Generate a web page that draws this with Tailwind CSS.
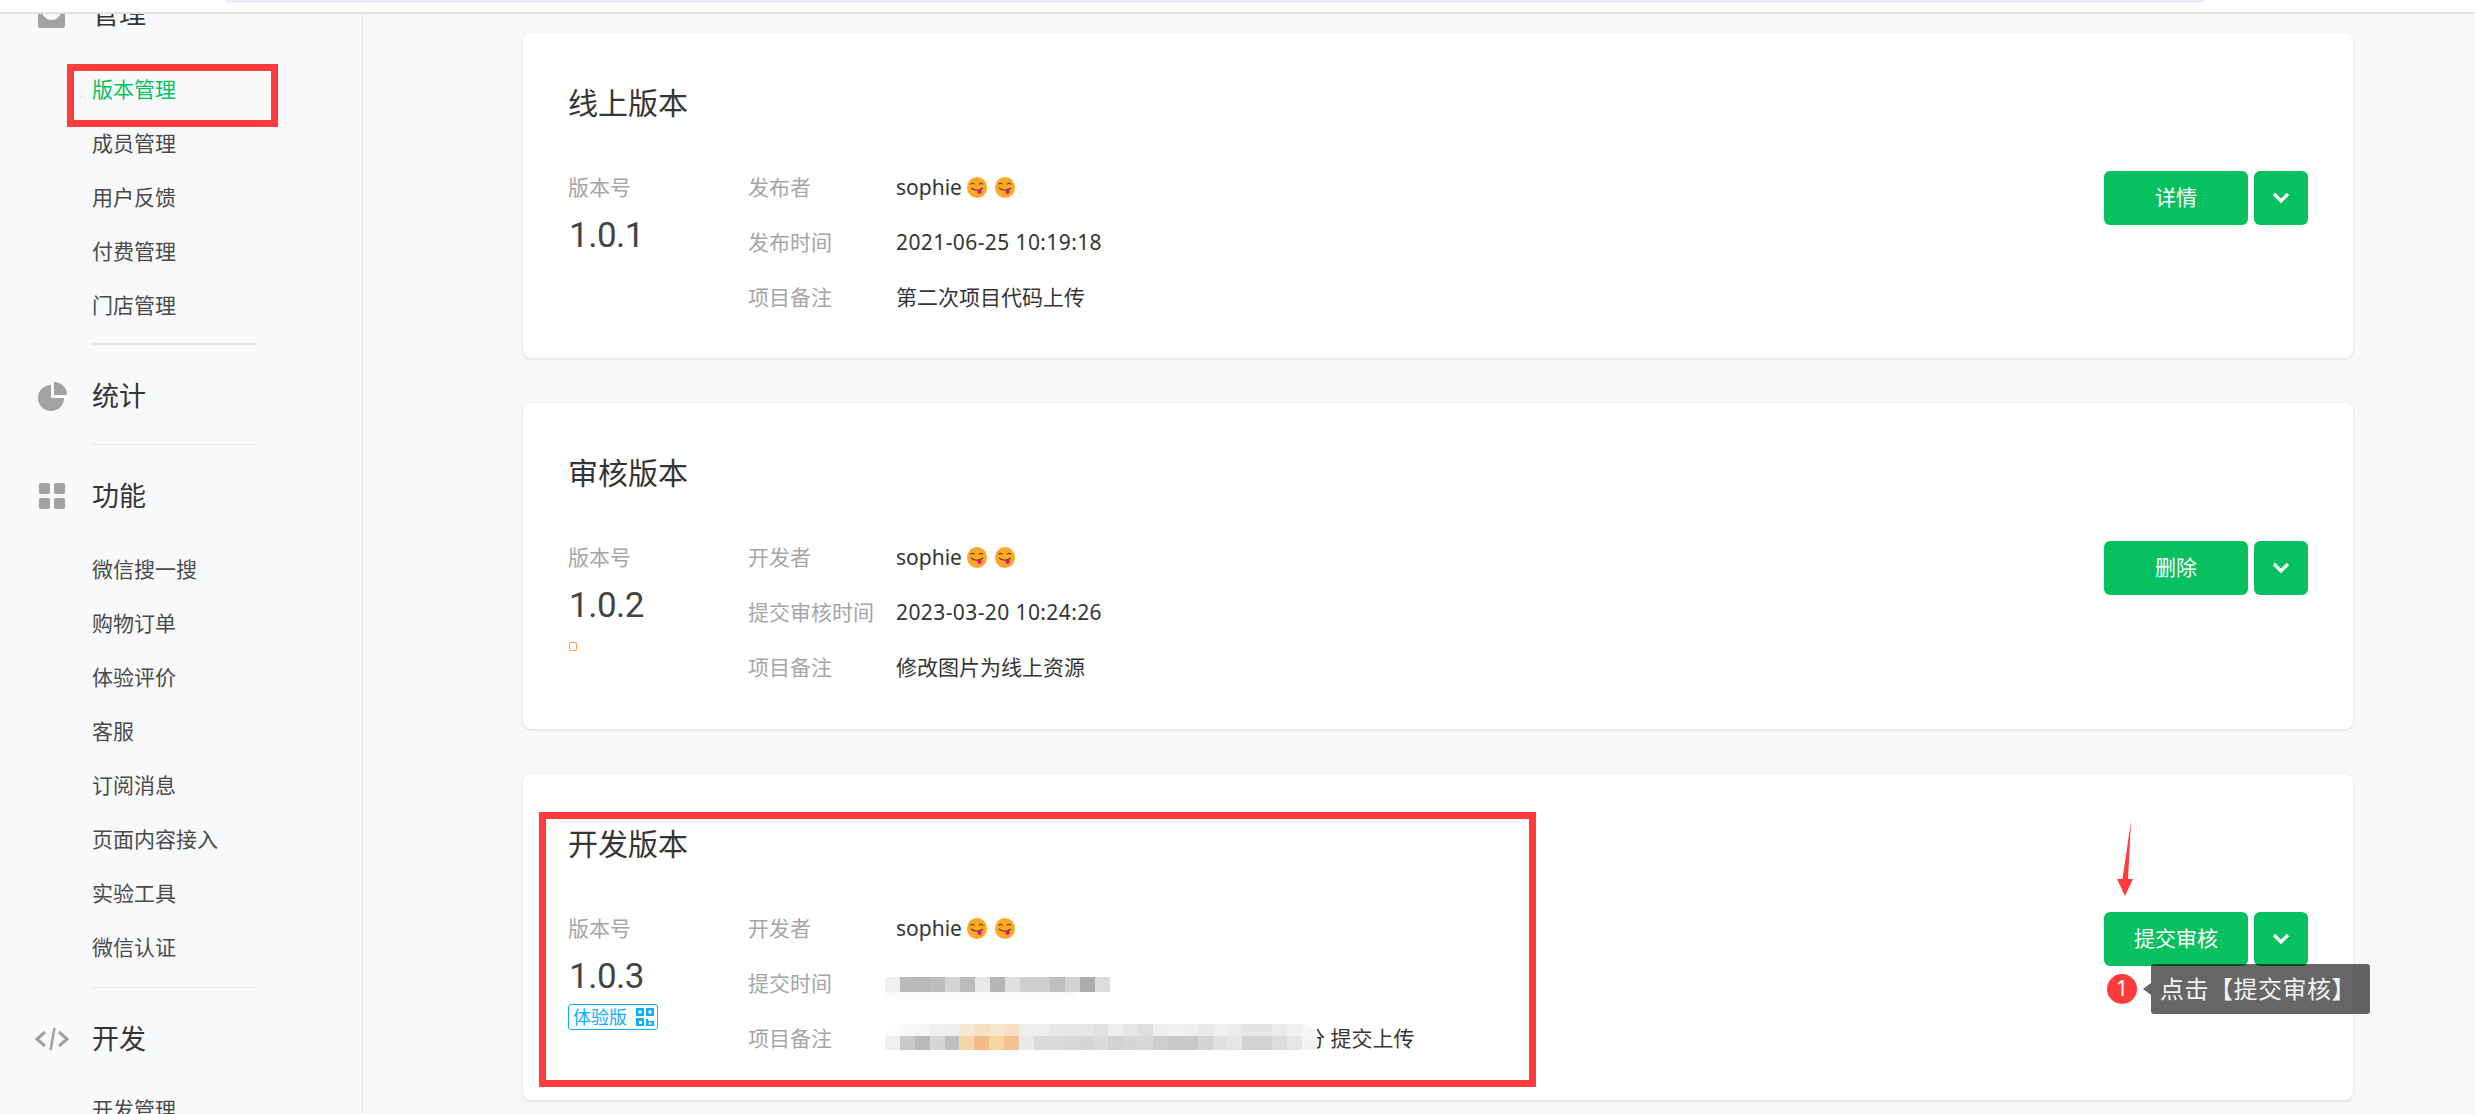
<!DOCTYPE html>
<html lang="zh-CN">
<head>
    <meta charset="UTF-8">
    <title>版本管理</title>
    <script src="https://cdn.jsdelivr.net/npm/@tailwindcss/browser@4"></script>
</head>
<body class="h-[1114px] overflow-hidden bg-[#f7f8fa] text-[#353535] font-['Noto_Sans','Noto_Sans_CJK_SC',sans-serif]">
    <!-- shared emoji -->
    <svg class="hidden">
        <symbol id="yum" viewBox="0 0 20 21">
            <ellipse cx="10" cy="10.5" rx="10" ry="10.5" fill="#ffa827"/>
            <path d="M3.5 7.500q2-2.500 4 0M12 7.500q2-2.500 4 0" fill="none" stroke="#5a4014" stroke-width="1.200"/>
            <path d="M4 11q6 4.500 12 0" fill="none" stroke="#5a4014" stroke-width="1.200"/>
            <path d="M10.500 13.500l4-1.500v3a2 2 0 0 1-4 0z" fill="#e6108a"/>
        </symbol>
    </svg>

    <!-- top bar -->
    <div class="h-[14px] bg-white border-b-2 border-[#e2e3e3]">
        <div class="ml-[225px] w-[1980px] h-[3px] bg-[#eceff9] rounded-b-xl"></div>
    </div>

    <div class="flex h-[1100px] overflow-hidden">
        <!-- sidebar -->
        <aside class="relative w-[363px] shrink-0 bg-[#f8f9fb] border-r border-[#e6e7eb] text-[21px] text-[#4a4a4a]">
            <div class="-mt-[27px]">
                <div class="flex items-center h-[54px] pl-[38px] text-[27px] text-[#353535]">
                    <span class="w-[54px] h-[54px] flex items-center">
                        <svg class="w-[27px] h-[28px]" viewBox="0 0 27 28"><path d="M2 0h23a2 2 0 0 1 2 2v24a2 2 0 0 1-2 2H2a2 2 0 0 1-2-2V2a2 2 0 0 1 2-2z" fill="#a2a2a2"/><path d="M5 14h17v1q-3 5-8.500 5T5 15z" fill="#f8f9fb"/></svg>
                    </span>
                    管理
                </div>
                <ul class="mt-[22px] pl-[92px]">
                    <li class="h-[54px] flex items-center text-[#07c160]">版本管理</li>
                    <li class="h-[54px] flex items-center">成员管理</li>
                    <li class="h-[54px] flex items-center">用户反馈</li>
                    <li class="h-[54px] flex items-center">付费管理</li>
                    <li class="h-[54px] flex items-center">门店管理</li>
                </ul>
                <div class="ml-[92px] mt-[10px] w-[165px] h-[2px] bg-[#e7e8ea]"></div>
                <div class="mt-[24px] flex items-center h-[54px] pl-[38px] text-[27px] text-[#353535]">
                    <span class="w-[54px] h-[54px] flex items-center">
                        <svg class="w-[29px] h-[29px]" viewBox="0 0 29 29" fill="#a2a2a2"><path d="M13 3v13h13a13 13 0 1 1-13-13z"/><path d="M16 0a13 13 0 0 1 13 13H16z"/></svg>
                    </span>
                    统计
                </div>
                <div class="ml-[92px] mt-[21px] w-[165px] h-px bg-[#e7e8ea]"></div>
                <div class="mt-[24px] flex items-center h-[54px] pl-[38px] text-[27px] text-[#353535]">
                    <span class="w-[54px] h-[54px] flex items-center">
                        <svg class="w-[27px] h-[26px] ml-px" viewBox="0 0 27 26" fill="#a2a2a2"><rect width="11" height="11" rx="2"/><rect x="15" width="11" height="11" rx="2"/><rect y="15" width="11" height="11" rx="2"/><rect x="15" y="15" width="11" height="11" rx="2"/></svg>
                    </span>
                    功能
                </div>
                <ul class="mt-[20px] pl-[92px]">
                    <li class="h-[54px] flex items-center">微信搜一搜</li>
                    <li class="h-[54px] flex items-center">购物订单</li>
                    <li class="h-[54px] flex items-center">体验评价</li>
                    <li class="h-[54px] flex items-center">客服</li>
                    <li class="h-[54px] flex items-center">订阅消息</li>
                    <li class="h-[54px] flex items-center">页面内容接入</li>
                    <li class="h-[54px] flex items-center">实验工具</li>
                    <li class="h-[54px] flex items-center">微信认证</li>
                </ul>
                <div class="ml-[92px] mt-[12px] w-[165px] h-px bg-[#e7e8ea]"></div>
                <div class="mt-[24px] flex items-center h-[54px] pl-[35px] text-[27px] text-[#353535]">
                    <span class="w-[57px] h-[54px] flex items-center">
                        <svg class="w-[34px] h-[24px]" viewBox="0 0 34 24" fill="none" stroke="#a2a2a2" stroke-width="3"><path d="M10 5l-8 7 8 7M24 5l8 7-8 7"/><path d="M19.500 1l-4 22" stroke-width="2.500"/></svg>
                    </span>
                    开发
                </div>
                <ul class="mt-[17px] pl-[92px]">
                    <li class="h-[54px] flex items-center">开发管理</li>
                </ul>
            </div>
            <!-- annotation -->
            <div class="absolute left-[67px] top-[50px] w-[211px] h-[63px] border-[7px] border-[#ff3b3b]"></div>
        </aside>

        <!-- main -->
        <main class="flex-1 pl-[160px] pt-[19px]">
            <!-- online version -->
            <section class="w-[1830px] h-[325px] bg-white rounded-lg shadow-[0_1px_3px_rgba(0,0,0,0.12)] pl-[45px] pr-[45px] pt-[50px]">
                <h2 class="text-[30px] leading-[40px]">线上版本</h2>
                <div class="flex mt-[37px]">
                    <div class="w-[180px] text-[21px]">
                        <div class="h-[55px] flex items-center text-[#a6a6a6]">版本号</div>
                        <div class="ml-px mt-[3px] text-[35px] leading-[36px] tracking-[-0.5px] text-[#444444] font-['Roboto',sans-serif]">1.0.1</div>
                    </div>
                    <div class="flex-1 text-[21px]">
                        <div class="h-[55px] flex items-center"><span class="w-[148px] text-[#a6a6a6]">发布者</span><span>sophie</span><svg class="w-[20px] h-[21px] ml-[5px]"><use href="#yum"/></svg><svg class="w-[20px] h-[21px] ml-[8px]"><use href="#yum"/></svg></div>
                        <div class="h-[55px] flex items-center"><span class="w-[148px] text-[#a6a6a6]">发布时间</span><span class="tracking-[0.4px]">2021-06-25 10:19:18</span></div>
                        <div class="h-[55px] flex items-center"><span class="w-[148px] text-[#a6a6a6]">项目备注</span><span>第二次项目代码上传</span></div>
                    </div>
                    <div class="flex gap-[6px] mt-[11px]">
                        <button class="w-[144px] h-[54px] rounded-md bg-[#07c160] text-white text-[21px]">详情</button>
                        <button class="w-[54px] h-[54px] rounded-md bg-[#07c160] flex items-center justify-center"><svg class="w-[18px] h-[12px]" viewBox="0 0 18 12" fill="none" stroke="#fff" stroke-width="3.200"><path d="M2 2l7 7 7-7"/></svg></button>
                    </div>
                </div>
            </section>

            <!-- review version -->
            <section class="mt-[45px] w-[1830px] h-[326px] bg-white rounded-lg shadow-[0_1px_3px_rgba(0,0,0,0.12)] pl-[45px] pr-[45px] pt-[50px]">
                <h2 class="text-[30px] leading-[40px]">审核版本</h2>
                <div class="flex mt-[37px]">
                    <div class="w-[180px] text-[21px]">
                        <div class="h-[55px] flex items-center text-[#a6a6a6]">版本号</div>
                        <div class="ml-px mt-[3px] text-[35px] leading-[36px] tracking-[-0.5px] text-[#444444] font-['Roboto',sans-serif]">1.0.2</div>
                        <div class="ml-px mt-[18px] w-[8px] h-[9px] rounded-[2px] border border-[#fa9d3b]"></div>
                    </div>
                    <div class="flex-1 text-[21px]">
                        <div class="h-[55px] flex items-center"><span class="w-[148px] text-[#a6a6a6]">开发者</span><span>sophie</span><svg class="w-[20px] h-[21px] ml-[5px]"><use href="#yum"/></svg><svg class="w-[20px] h-[21px] ml-[8px]"><use href="#yum"/></svg></div>
                        <div class="h-[55px] flex items-center"><span class="w-[148px] text-[#a6a6a6] whitespace-nowrap">提交审核时间</span><span class="tracking-[0.4px]">2023-03-20 10:24:26</span></div>
                        <div class="h-[55px] flex items-center"><span class="w-[148px] text-[#a6a6a6]">项目备注</span><span>修改图片为线上资源</span></div>
                    </div>
                    <div class="flex gap-[6px] mt-[11px]">
                        <button class="w-[144px] h-[54px] rounded-md bg-[#07c160] text-white text-[21px]">删除</button>
                        <button class="w-[54px] h-[54px] rounded-md bg-[#07c160] flex items-center justify-center"><svg class="w-[18px] h-[12px]" viewBox="0 0 18 12" fill="none" stroke="#fff" stroke-width="3.200"><path d="M2 2l7 7 7-7"/></svg></button>
                    </div>
                </div>
            </section>

            <!-- dev version -->
            <section class="relative mt-[45px] w-[1830px] h-[326px] bg-white rounded-lg shadow-[0_1px_3px_rgba(0,0,0,0.12)] pl-[45px] pr-[45px] pt-[50px]">
                <h2 class="text-[30px] leading-[40px]">开发版本</h2>
                <div class="flex mt-[37px]">
                    <div class="w-[180px] text-[21px]">
                        <div class="h-[55px] flex items-center text-[#a6a6a6]">版本号</div>
                        <div class="ml-px mt-[3px] text-[35px] leading-[36px] tracking-[-0.5px] text-[#444444] font-['Roboto',sans-serif]">1.0.3</div>
                        <div class="mt-[9px] w-[90px] h-[26px] rounded-[3px] border border-[#10aeff] flex items-center pl-[4px] text-[18px] text-[#10aeff]">
                            <span class="leading-none">体验版</span>
                            <svg class="w-[18px] h-[18px] ml-[9px]" viewBox="0 0 18 18" fill="#10aeff"><path fill-rule="evenodd" d="M0 0h8v8H0zM2.500 2.500v3h3v-3zM10 0h8v8h-8zM12.500 2.500v3h3v-3zM0 10h8v8H0zM3 13v3h3v-3z"/><path fill-rule="evenodd" d="M10 11h2v2h6v5h-8zM12.500 14.500v2h3v-2z"/></svg>
                        </div>
                    </div>
                    <div class="flex-1 text-[21px]">
                        <div class="h-[55px] flex items-center"><span class="w-[148px] text-[#a6a6a6]">开发者</span><span>sophie</span><svg class="w-[20px] h-[21px] ml-[5px]"><use href="#yum"/></svg><svg class="w-[20px] h-[21px] ml-[8px]"><use href="#yum"/></svg></div>
                        <div class="h-[55px] flex items-center">
                            <span class="w-[137px] text-[#a6a6a6]">提交时间</span>
                            <!-- blurred timestamp -->
                            <div class="mt-[8px] w-[225px]">
                                <div class="flex h-[15px]">
                                    <i class="flex-1 bg-[#f0f0f0]"></i><i class="flex-1 bg-[#bababa]"></i><i class="flex-1 bg-[#b9b9b9]"></i><i class="flex-1 bg-[#bdbdbd]"></i><i class="flex-1 bg-[#d6d6d6]"></i><i class="flex-1 bg-[#bcbcbc]"></i><i class="flex-1 bg-[#e8e8e8]"></i><i class="flex-1 bg-[#b5b5b5]"></i><i class="flex-1 bg-[#dfdfdf]"></i><i class="flex-1 bg-[#cecece]"></i><i class="flex-1 bg-[#cecece]"></i><i class="flex-1 bg-[#bfbfbf]"></i><i class="flex-1 bg-[#d2d2d2]"></i><i class="flex-1 bg-[#adadad]"></i><i class="flex-1 bg-[#dcdcdc]"></i>
                                </div>
                                <div class="h-[7px] w-[190px] bg-[#fafafa] rounded-b-md"></div>
                            </div>
                        </div>
                        <div class="h-[55px] flex items-center">
                            <span class="w-[137px] text-[#a6a6a6]">项目备注</span>
                            <!-- blurred note -->
                            <div class="relative z-10 -mt-[4px] w-[432px]">
                                <div class="flex h-[12px] rounded-tr-2xl rounded-tl-2xl overflow-hidden">
                                    <i class="flex-1 bg-[#fbfbfb]"></i><i class="flex-1 bg-[#f8f8f8]"></i><i class="flex-1 bg-[#f6f6f6]"></i><i class="flex-1 bg-[#f0f0f0]"></i><i class="flex-1 bg-[#eeeeee]"></i><i class="flex-1 bg-[#f6e8d6]"></i><i class="flex-1 bg-[#f6e0c2]"></i><i class="flex-1 bg-[#f7e6cf]"></i><i class="flex-1 bg-[#f7e0c4]"></i><i class="flex-1 bg-[#ededed]"></i><i class="flex-1 bg-[#eeeeee]"></i><i class="flex-1 bg-[#e7e7e7]"></i><i class="flex-1 bg-[#e6e6e6]"></i><i class="flex-1 bg-[#e6e6e6]"></i><i class="flex-1 bg-[#e1e1e1]"></i><i class="flex-1 bg-[#eeeeee]"></i><i class="flex-1 bg-[#e6e6e6]"></i><i class="flex-1 bg-[#dedede]"></i><i class="flex-1 bg-[#eeeeee]"></i><i class="flex-1 bg-[#f1f1f1]"></i><i class="flex-1 bg-[#efefef]"></i><i class="flex-1 bg-[#eaeaea]"></i><i class="flex-1 bg-[#f0f0f0]"></i><i class="flex-1 bg-[#ececec]"></i><i class="flex-1 bg-[#e5e5e5]"></i><i class="flex-1 bg-[#e5e5e5]"></i><i class="flex-1 bg-[#ebebeb]"></i><i class="flex-1 bg-[#f0f0f0]"></i><i class="flex-1 bg-[#f6f6f6]"></i>
                                </div>
                                <div class="flex h-[14px]">
                                    <i class="flex-1 bg-[#f0f0f0]"></i><i class="flex-1 bg-[#c9c9c9]"></i><i class="flex-1 bg-[#b9b9b9]"></i><i class="flex-1 bg-[#d6d6d6]"></i><i class="flex-1 bg-[#bfbfbf]"></i><i class="flex-1 bg-[#f3d5a6]"></i><i class="flex-1 bg-[#f4ba8a]"></i><i class="flex-1 bg-[#f8d6a0]"></i><i class="flex-1 bg-[#f3c196]"></i><i class="flex-1 bg-[#e9e9e9]"></i><i class="flex-1 bg-[#dadada]"></i><i class="flex-1 bg-[#dadada]"></i><i class="flex-1 bg-[#d8d8d8]"></i><i class="flex-1 bg-[#d6d6d6]"></i><i class="flex-1 bg-[#dbdbdb]"></i><i class="flex-1 bg-[#d2d2d2]"></i><i class="flex-1 bg-[#d6d6d6]"></i><i class="flex-1 bg-[#d8d8d8]"></i><i class="flex-1 bg-[#cdcdcd]"></i><i class="flex-1 bg-[#c8c8c8]"></i><i class="flex-1 bg-[#c8c8c8]"></i><i class="flex-1 bg-[#d4d4d4]"></i><i class="flex-1 bg-[#e0e0e0]"></i><i class="flex-1 bg-[#e6e6e6]"></i><i class="flex-1 bg-[#d2d2d2]"></i><i class="flex-1 bg-[#d2d2d2]"></i><i class="flex-1 bg-[#dcdcdc]"></i><i class="flex-1 bg-[#e6e6e6]"></i><i class="flex-1 bg-[#f4f4f4]"></i>
                                </div>
                            </div>
                            <span class="-ml-[13px]">分 提交上传</span>
                        </div>
                    </div>
                    <div class="flex gap-[6px] mt-[11px]">
                        <button class="w-[144px] h-[54px] rounded-md bg-[#07c160] text-white text-[21px]">提交审核</button>
                        <button class="w-[54px] h-[54px] rounded-md bg-[#07c160] flex items-center justify-center"><svg class="w-[18px] h-[12px]" viewBox="0 0 18 12" fill="none" stroke="#fff" stroke-width="3.200"><path d="M2 2l7 7 7-7"/></svg></button>
                    </div>
                </div>

                <!-- annotations -->
                <div class="absolute left-[16px] top-[38px] w-[997px] h-[275px] border-[7px] border-[#ff3b3b]"></div>
                <svg class="absolute left-[1590px] top-[42px] w-[24px] h-[80px]" viewBox="0 0 24 80" fill="#ff3b3b"><path d="M18 5l-3 58h5l-8 17-8-17h5.500z"/></svg>
                <div class="absolute left-[1584px] top-[200px] w-[30px] h-[30px] rounded-full bg-[#ff3b3b] flex items-center justify-center text-white text-[21px]">1</div>
                <div class="absolute left-[1628px] top-[190px] w-[219px] h-[50px] rounded-[3px] bg-black/60 flex items-center pl-[9px] text-[24px] tracking-[0.5px] text-[#f2f2f2] whitespace-nowrap">
                    点击【提交审核】
                    <span class="absolute -left-[8px] top-[19px] w-0 h-0 border-y-[6px] border-y-transparent border-r-[8px] border-r-black/60"></span>
                </div>
            </section>
        </main>
    </div>
</body>
</html>
